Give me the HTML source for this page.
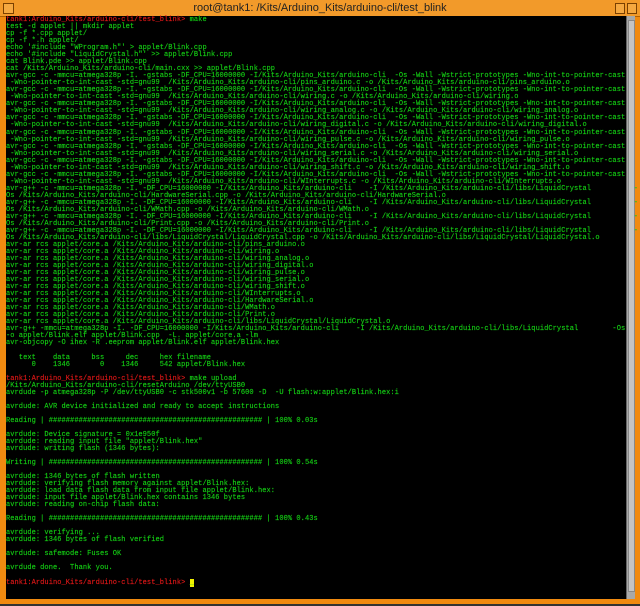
<!DOCTYPE html>
<html><head><meta charset="utf-8"><style>
html,body{margin:0;padding:0;background:#000;}
body{width:640px;height:606px;position:relative;overflow:hidden;}
.frame{position:absolute;left:0;top:0;width:640px;height:604px;background:#f08a10;}
.title{position:absolute;left:0;top:0;width:640px;height:16px;background:#f29a2a;border-bottom:1px solid #b06000;}
.title span{position:absolute;left:0;width:640px;top:2px;text-align:center;font:11px "Liberation Sans",sans-serif;color:#222;}
.btnl{position:absolute;left:3px;top:3px;width:9px;height:9px;border:1px solid #7a4000;background:#f5a840;}
.btnr1{position:absolute;left:615px;top:3px;width:8px;height:9px;border:1px solid #7a4000;background:#f5a840;}
.btnr2{position:absolute;left:627px;top:3px;width:8px;height:9px;border:1px solid #7a4000;background:#f5a840;}
.term{position:absolute;left:6px;top:16px;width:620px;height:583px;background:#000;}
.sb{position:absolute;left:626px;top:16px;width:8px;height:583px;background:#a8a8a8;border-left:1px solid #666;}
.sb .th{position:absolute;left:1px;top:4px;width:5px;height:570px;background:#c4c4c4;border:1px solid #888;}
.bot{position:absolute;left:0;top:604px;width:640px;height:2px;background:#333;}
pre{position:absolute;left:6px;top:17px;margin:0;font:7px/7.03px "Liberation Mono",monospace;color:#14cc14;white-space:pre;letter-spacing:0.07px;-webkit-text-stroke:0.15px #14cc14;}
.r{color:#e01818;-webkit-text-stroke:0.15px #e01818;}
.cur{background:#f0f000;color:#f0f000;}
</style></head><body>
<div class="frame"></div>
<div class="title"><span>root@tank1: /Kits/Arduino_Kits/arduino-cli/test_blink</span></div>
<div class="btnl"></div><div class="btnr1"></div><div class="btnr2"></div>
<div class="term"></div>
<div class="sb"><div class="th"></div></div>
<div class="bot"></div>
<pre><span class="r">tank1:Arduino_Kits/arduino-cli/test_blink&gt;</span> make
test -d applet || mkdir applet
cp -f *.cpp applet/
cp -f *.h applet/
echo '#include "WProgram.h"' &gt; applet/Blink.cpp
echo '#include "LiquidCrystal.h"' &gt;&gt; applet/Blink.cpp
cat Blink.pde &gt;&gt; applet/Blink.cpp
cat /Kits/Arduino_Kits/arduino-cli/main.cxx &gt;&gt; applet/Blink.cpp
avr-gcc -c -mmcu=atmega328p -I. -gstabs -DF_CPU=16000000 -I/Kits/Arduino_Kits/arduino-cli  -Os -Wall -Wstrict-prototypes -Wno-int-to-pointer-cast
 -Wno-pointer-to-int-cast -std=gnu99  /Kits/Arduino_Kits/arduino-cli/pins_arduino.c -o /Kits/Arduino_Kits/arduino-cli/pins_arduino.o
avr-gcc -c -mmcu=atmega328p -I. -gstabs -DF_CPU=16000000 -I/Kits/Arduino_Kits/arduino-cli  -Os -Wall -Wstrict-prototypes -Wno-int-to-pointer-cast
 -Wno-pointer-to-int-cast -std=gnu99  /Kits/Arduino_Kits/arduino-cli/wiring.c -o /Kits/Arduino_Kits/arduino-cli/wiring.o
avr-gcc -c -mmcu=atmega328p -I. -gstabs -DF_CPU=16000000 -I/Kits/Arduino_Kits/arduino-cli  -Os -Wall -Wstrict-prototypes -Wno-int-to-pointer-cast
 -Wno-pointer-to-int-cast -std=gnu99  /Kits/Arduino_Kits/arduino-cli/wiring_analog.c -o /Kits/Arduino_Kits/arduino-cli/wiring_analog.o
avr-gcc -c -mmcu=atmega328p -I. -gstabs -DF_CPU=16000000 -I/Kits/Arduino_Kits/arduino-cli  -Os -Wall -Wstrict-prototypes -Wno-int-to-pointer-cast
 -Wno-pointer-to-int-cast -std=gnu99  /Kits/Arduino_Kits/arduino-cli/wiring_digital.c -o /Kits/Arduino_Kits/arduino-cli/wiring_digital.o
avr-gcc -c -mmcu=atmega328p -I. -gstabs -DF_CPU=16000000 -I/Kits/Arduino_Kits/arduino-cli  -Os -Wall -Wstrict-prototypes -Wno-int-to-pointer-cast
 -Wno-pointer-to-int-cast -std=gnu99  /Kits/Arduino_Kits/arduino-cli/wiring_pulse.c -o /Kits/Arduino_Kits/arduino-cli/wiring_pulse.o
avr-gcc -c -mmcu=atmega328p -I. -gstabs -DF_CPU=16000000 -I/Kits/Arduino_Kits/arduino-cli  -Os -Wall -Wstrict-prototypes -Wno-int-to-pointer-cast
 -Wno-pointer-to-int-cast -std=gnu99  /Kits/Arduino_Kits/arduino-cli/wiring_serial.c -o /Kits/Arduino_Kits/arduino-cli/wiring_serial.o
avr-gcc -c -mmcu=atmega328p -I. -gstabs -DF_CPU=16000000 -I/Kits/Arduino_Kits/arduino-cli  -Os -Wall -Wstrict-prototypes -Wno-int-to-pointer-cast
 -Wno-pointer-to-int-cast -std=gnu99  /Kits/Arduino_Kits/arduino-cli/wiring_shift.c -o /Kits/Arduino_Kits/arduino-cli/wiring_shift.o
avr-gcc -c -mmcu=atmega328p -I. -gstabs -DF_CPU=16000000 -I/Kits/Arduino_Kits/arduino-cli  -Os -Wall -Wstrict-prototypes -Wno-int-to-pointer-cast
 -Wno-pointer-to-int-cast -std=gnu99  /Kits/Arduino_Kits/arduino-cli/WInterrupts.c -o /Kits/Arduino_Kits/arduino-cli/WInterrupts.o
avr-g++ -c -mmcu=atmega328p -I. -DF_CPU=16000000 -I/Kits/Arduino_Kits/arduino-cli    -I /Kits/Arduino_Kits/arduino-cli/libs/LiquidCrystal          -
Os /Kits/Arduino_Kits/arduino-cli/HardwareSerial.cpp -o /Kits/Arduino_Kits/arduino-cli/HardwareSerial.o
avr-g++ -c -mmcu=atmega328p -I. -DF_CPU=16000000 -I/Kits/Arduino_Kits/arduino-cli    -I /Kits/Arduino_Kits/arduino-cli/libs/LiquidCrystal          -
Os /Kits/Arduino_Kits/arduino-cli/WMath.cpp -o /Kits/Arduino_Kits/arduino-cli/WMath.o
avr-g++ -c -mmcu=atmega328p -I. -DF_CPU=16000000 -I/Kits/Arduino_Kits/arduino-cli    -I /Kits/Arduino_Kits/arduino-cli/libs/LiquidCrystal          -
Os /Kits/Arduino_Kits/arduino-cli/Print.cpp -o /Kits/Arduino_Kits/arduino-cli/Print.o
avr-g++ -c -mmcu=atmega328p -I. -DF_CPU=16000000 -I/Kits/Arduino_Kits/arduino-cli    -I /Kits/Arduino_Kits/arduino-cli/libs/LiquidCrystal          -
Os /Kits/Arduino_Kits/arduino-cli/libs/LiquidCrystal/LiquidCrystal.cpp -o /Kits/Arduino_Kits/arduino-cli/libs/LiquidCrystal/LiquidCrystal.o
avr-ar rcs applet/core.a /Kits/Arduino_Kits/arduino-cli/pins_arduino.o
avr-ar rcs applet/core.a /Kits/Arduino_Kits/arduino-cli/wiring.o
avr-ar rcs applet/core.a /Kits/Arduino_Kits/arduino-cli/wiring_analog.o
avr-ar rcs applet/core.a /Kits/Arduino_Kits/arduino-cli/wiring_digital.o
avr-ar rcs applet/core.a /Kits/Arduino_Kits/arduino-cli/wiring_pulse.o
avr-ar rcs applet/core.a /Kits/Arduino_Kits/arduino-cli/wiring_serial.o
avr-ar rcs applet/core.a /Kits/Arduino_Kits/arduino-cli/wiring_shift.o
avr-ar rcs applet/core.a /Kits/Arduino_Kits/arduino-cli/WInterrupts.o
avr-ar rcs applet/core.a /Kits/Arduino_Kits/arduino-cli/HardwareSerial.o
avr-ar rcs applet/core.a /Kits/Arduino_Kits/arduino-cli/WMath.o
avr-ar rcs applet/core.a /Kits/Arduino_Kits/arduino-cli/Print.o
avr-ar rcs applet/core.a /Kits/Arduino_Kits/arduino-cli/libs/LiquidCrystal/LiquidCrystal.o
avr-g++ -mmcu=atmega328p -I. -DF_CPU=16000000 -I/Kits/Arduino_Kits/arduino-cli    -I /Kits/Arduino_Kits/arduino-cli/libs/LiquidCrystal        -Os
-o applet/Blink.elf applet/Blink.cpp  -L. applet/core.a -lm
avr-objcopy -O ihex -R .eeprom applet/Blink.elf applet/Blink.hex

   text    data     bss     dec     hex filename
      0    1346       0    1346     542 applet/Blink.hex

<span class="r">tank1:Arduino_Kits/arduino-cli/test_blink&gt;</span> make upload
/Kits/Arduino_Kits/arduino-cli/resetArduino /dev/ttyUSB0
avrdude -p atmega328p -P /dev/ttyUSB0 -c stk500v1 -b 57600 -D  -U flash:w:applet/Blink.hex:i

avrdude: AVR device initialized and ready to accept instructions

Reading | ################################################## | 100% 0.03s

avrdude: Device signature = 0x1e950f
avrdude: reading input file "applet/Blink.hex"
avrdude: writing flash (1346 bytes):

Writing | ################################################## | 100% 0.54s

avrdude: 1346 bytes of flash written
avrdude: verifying flash memory against applet/Blink.hex:
avrdude: load data flash data from input file applet/Blink.hex:
avrdude: input file applet/Blink.hex contains 1346 bytes
avrdude: reading on-chip flash data:

Reading | ################################################## | 100% 0.43s

avrdude: verifying ...
avrdude: 1346 bytes of flash verified

avrdude: safemode: Fuses OK

avrdude done.  Thank you.

<span class="r">tank1:Arduino_Kits/arduino-cli/test_blink&gt;</span> <span class="cur">_</span></pre>
</body></html>
